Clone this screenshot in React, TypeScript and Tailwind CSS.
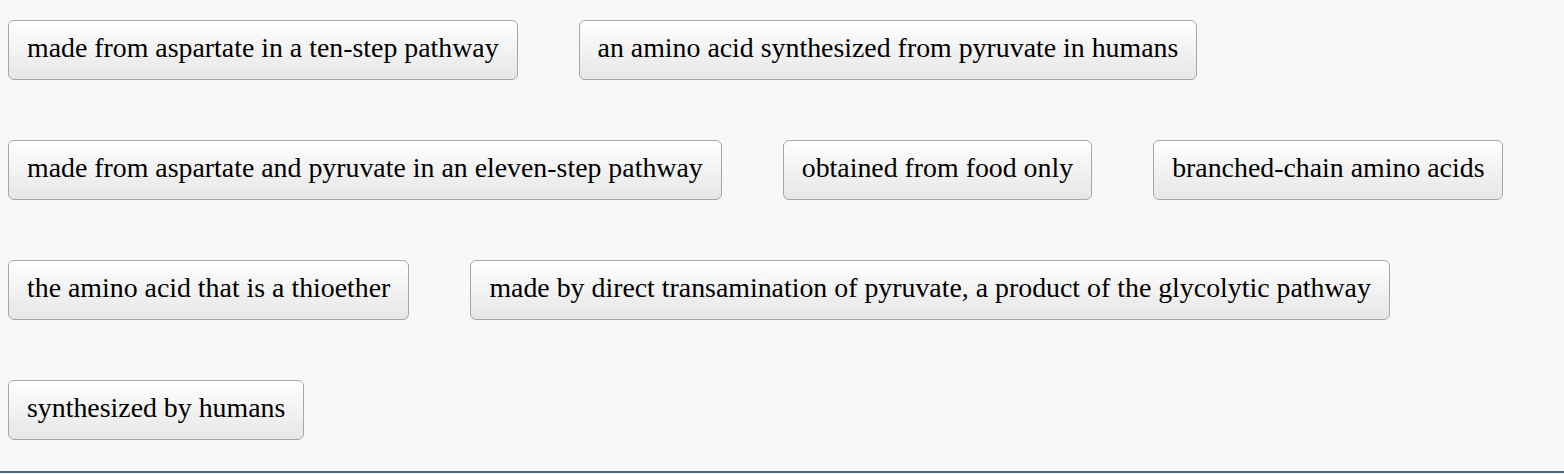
import React from 'react';

const rows: string[] = [
  'made from aspartate in a ten-step pathway',
  'an amino acid synthesized from pyruvate in humans',
  'made from aspartate and pyruvate in an eleven-step pathway',
  'obtained from food only',
  'branched-chain amino acids',
  'the amino acid that is a thioether',
  'made by direct transamination of pyruvate, a product of the glycolytic pathway',
  'synthesized by humans',
];

const App: React.FC = () => {
  return (
    <div className="min-h-[474px] bg-[#f8f8f8]">
      <div className="flex flex-wrap gap-x-[61px] gap-y-[60px] px-[8px] pt-[20px] pb-[31px] border-b-2 border-[#4f6580]">
        {rows.map((label) => (
          <button
            key={label}
            className="h-[60px] px-[18px] pb-[4px] rounded-[6px] border-[1.5px] border-[#a6a6a6] bg-gradient-to-b from-white to-[#e6e6e6] text-black text-[27.85px] leading-none"
            style={{ fontFamily: '"Liberation Serif", "Times New Roman", serif' }}
          >
            {label}
          </button>
        ))}
      </div>
    </div>
  );
};

export default App;
